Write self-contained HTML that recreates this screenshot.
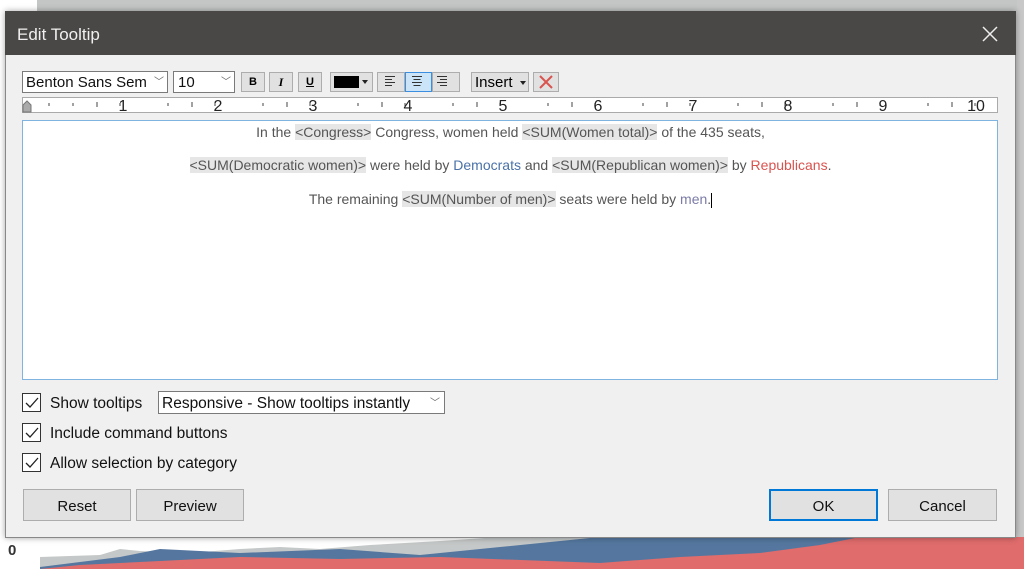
<!DOCTYPE html>
<html><head><meta charset="utf-8"><style>
*{box-sizing:border-box;margin:0;padding:0}
body{width:1024px;height:569px;overflow:hidden;background:#fff;font-family:"Liberation Sans",sans-serif;position:relative}
.a{position:absolute}
.btn{position:absolute;background:#e1e1e1;border:1px solid #adadad;font-size:15px;color:#111;text-align:center;line-height:33px}
.cb{position:absolute;width:19px;height:19px;border:1px solid #333;background:#fff}
.cb svg{position:absolute;left:2px;top:2px}
.lbl{position:absolute;font-size:15.5px;color:#111}
.tb{position:absolute;top:72px;height:20px;background:#e1e1e1;border:1px solid #adadad}
.hl{background:#e6e6e6}
.t{position:absolute;left:0;width:975px;text-align:center;font-size:14px;color:#555}
</style></head><body>
<div class="a" style="left:0;top:0;width:40px;height:569px;background:#fff"></div>
<div class="a" style="left:1015px;top:0;width:9px;height:569px;background:#c8c8c8"></div>
<div class="a" style="left:37px;top:0;width:980px;height:12px;background:#c4c6c6"></div>
<svg class="a" style="left:40px;top:537px" width="984" height="32">
<path d="M0 20 L60 18 L80 12 L100 14 L150 16 L200 12 L240 10 L280 12 L330 8 L400 4 L460 0 L984 0 L984 32 L0 32Z" fill="#c5c8c8"/>
<path d="M0 30 L80 20 L120 12 L200 16 L300 12 L380 18 L460 10 L560 0 L984 0 L984 32 L0 32Z" fill="#55779f"/>
<path d="M0 32 L40 28 L120 24 L200 20 L300 22 L400 20 L560 26 L640 20 L720 16 L780 8 L820 0 L984 0 L984 32Z" fill="#e06c6c"/>
</svg>
<div class="a" style="top:542px;font-size:15px;font-weight:bold;color:#333;left:8px">0</div>
<div class="a" style="left:5px;top:11px;width:1011px;height:527px;background:#f0f0f0;border:1px solid #888;box-shadow:0 0 6px rgba(0,0,0,.35)"></div>
<div class="a" style="left:5px;top:11px;width:1011px;height:44px;background:#4a4846"></div>
<div class="a" style="left:17px;top:25px;font-size:17px;color:#f0f0f0">Edit Tooltip</div>
<svg class="a" style="left:982px;top:26px" width="16" height="16"><path d="M1 1L15 15M15 1L1 15" stroke="#eee" stroke-width="1.5"/></svg>

<div class="a" style="left:22px;top:71px;width:146px;height:22px;background:#fff;border:1px solid #7a7a7a;font-size:15px;line-height:22px;padding-left:3px;color:#111">Benton Sans Sem<span style="position:absolute;right:3px;font-size:10px;color:#666">﹀</span></div>
<div class="a" style="left:173px;top:71px;width:62px;height:22px;background:#fff;border:1px solid #7a7a7a;font-size:15px;line-height:22px;padding-left:4px;color:#111">10<span style="position:absolute;right:3px;font-size:10px;color:#666">﹀</span></div>
<div class="tb" style="left:241px;width:24px;font-size:11px;font-weight:bold;text-align:center;line-height:18px">B</div>
<div class="tb" style="left:269px;width:24px;font-size:12px;font-style:italic;font-weight:bold;text-align:center;line-height:18px;font-family:'Liberation Serif'">I</div>
<div class="tb" style="left:298px;width:24px;font-size:11px;font-weight:bold;text-decoration:underline;text-align:center;line-height:18px">U</div>
<div class="tb" style="left:330px;width:43px"><div class="a" style="left:3px;top:3px;width:25px;height:12px;background:#000"></div><div class="a" style="left:31px;top:7px;border:3.5px solid transparent;border-top:4px solid #222"></div></div>
<div class="tb" style="left:377px;width:28px"></div>
<div class="tb" style="left:405px;width:27px;background:#cce4f7;border-color:#3c8ee0"></div>
<div class="tb" style="left:432px;width:28px"></div>
<svg class="a" style="left:385px;top:76px" width="80" height="12" stroke="#333" stroke-width="1"><path d="M0 .5h10M0 3.5h7M0 6.5h10M0 9.5h7M27 .5h10M28.5 3.5h7M27 6.5h10M28.5 9.5h7M52 .5h10M55 3.5h7M52 6.5h10M55 9.5h7"/></svg>
<div class="tb" style="left:471px;width:58px;font-size:15px;line-height:19px;padding-left:3px">Insert<span class="a" style="left:48px;top:8px;border:3.5px solid transparent;border-top:4px solid #222"></span></div>
<div class="tb" style="left:533px;width:26px"><svg class="a" style="left:5px;top:2px" width="14" height="14"><path d="M1 1L13 13M13 1L1 13" stroke="#d9534f" stroke-width="2"/></svg></div>

<div class="a" style="left:22px;top:97px;width:976px;height:16px;background:#fff;border:1px solid #aaa"></div>
<svg class="a" style="left:22px;top:97px" width="976" height="16">
<g stroke="#444" stroke-width="1">
<path d="M27 6v3M51 6v3M75 5v5M98 6v3M146 6v3M170 5v5M193 6v3M241 6v3M265 5v5M288 6v3M336 6v3M360 5v5M383 6v3M431 6v3M455 5v5M478 6v3M526 6v3M550 5v5M573 6v3M621 6v3M645 5v5M668 6v3M716 6v3M740 5v5M763 6v3M811 6v3M835 5v5M858 6v3M906 6v3M930 5v5M953 6v3"/>
</g>
<path d="M1 15V8l4-4 4 4v7z" fill="#aaa" stroke="#777"/>
<g font-size="16" fill="#222" font-family="Liberation Sans" text-anchor="middle">
<text x="101" y="14">1</text><text x="196" y="14">2</text><text x="291" y="14">3</text><text x="386" y="14">4</text><text x="481" y="14">5</text><text x="576" y="14">6</text><text x="671" y="14">7</text><text x="766" y="14">8</text><text x="861" y="14">9</text><text x="954" y="14">10</text></g>
</svg>

<div class="a" style="left:22px;top:120px;width:976px;height:260px;background:#fff;border:1px solid #7fb3e0">
<div class="t" style="top:3px">In the <span class="hl">&lt;Congress&gt;</span> Congress, women held <span class="hl">&lt;SUM(Women total)&gt;</span> of the 435 seats,</div>
<div class="t" style="top:36px"><span class="hl">&lt;SUM(Democratic women)&gt;</span> were held by <span style="color:#4a72a8">Democrats</span> and <span class="hl">&lt;SUM(Republican women)&gt;</span> by <span style="color:#d9534f">Republicans</span>.</div>
<div class="t" style="top:70px">The remaining <span class="hl">&lt;SUM(Number of men)&gt;</span> seats were held by <span style="color:#7b7ba8">men</span>.<span style="display:inline-block;width:1px;height:15px;background:#000;vertical-align:middle"></span></div>
</div>

<div class="cb" style="left:22px;top:393px"><svg width="14" height="14"><path d="M1 7l4 4 8-9" fill="none" stroke="#222" stroke-width="1.3"/></svg></div>
<div class="lbl" style="left:50px;top:395px">Show tooltips</div>
<div class="a" style="left:158px;top:391px;width:287px;height:23px;background:#fff;border:1px solid #7a7a7a;font-size:15.5px;line-height:23px;padding-left:3px;color:#111">Responsive - Show tooltips instantly<span style="position:absolute;right:4px;font-size:10px;color:#666">﹀</span></div>
<div class="cb" style="left:22px;top:423px"><svg width="14" height="14"><path d="M1 7l4 4 8-9" fill="none" stroke="#222" stroke-width="1.3"/></svg></div>
<div class="lbl" style="left:50px;top:425px">Include command buttons</div>
<div class="cb" style="left:22px;top:453px"><svg width="14" height="14"><path d="M1 7l4 4 8-9" fill="none" stroke="#222" stroke-width="1.3"/></svg></div>
<div class="lbl" style="left:50px;top:455px">Allow selection by category</div>

<div class="btn" style="left:23px;top:489px;width:108px;height:32px">Reset</div>
<div class="btn" style="left:136px;top:489px;width:108px;height:32px">Preview</div>
<div class="btn" style="left:769px;top:489px;width:109px;height:32px;border:2px solid #0078d7;line-height:31px">OK</div>
<div class="btn" style="left:888px;top:489px;width:109px;height:32px">Cancel</div>
</body></html>
